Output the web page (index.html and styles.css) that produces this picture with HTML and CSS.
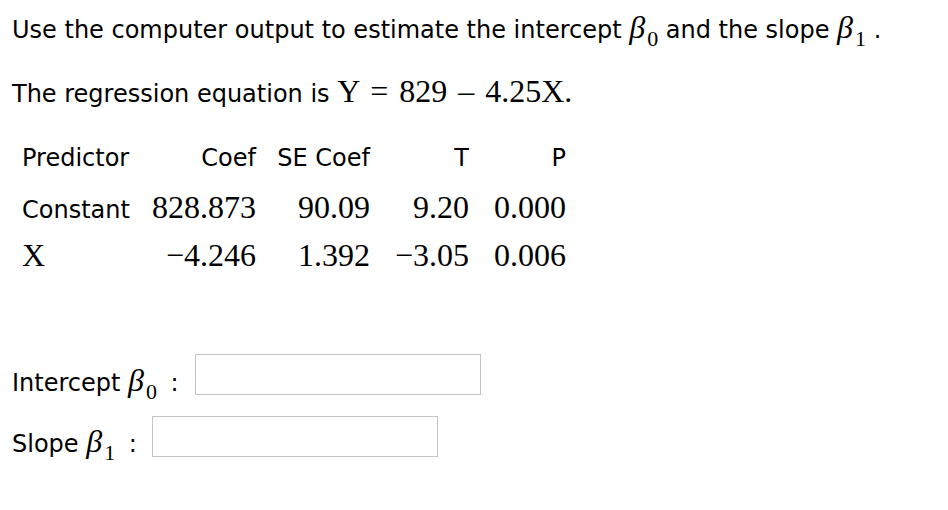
FILE: index.html
```html
<!DOCTYPE html>
<html>
<head>
<meta charset="utf-8">
<link rel="stylesheet" href="styles.css">
</head>
<body>
<div class="page">
  <p class="line l1">Use the computer output to estimate the intercept <span class="m"><i>β</i><sub>0</sub></span> and the slope <span class="m"><i>β</i><sub>1</sub></span> .</p>
  <p class="line l2">The regression equation is <span class="m">Y <span class="op">=</span> 829 <span class="op">–</span> 4.25X.</span></p>
  <div class="reg">
    <div class="row hd"><span class="c0">Predictor</span><span>Coef</span><span>SE Coef</span><span>T</span><span>P</span></div>
    <div class="row num"><span class="c0 sans">Constant</span><span>828.873</span><span>90.09</span><span>9.20</span><span>0.000</span></div>
    <div class="row num"><span class="c0">X</span><span>−4.246</span><span>1.392</span><span>−3.05</span><span>0.006</span></div>
  </div>
  <div class="field f1"><span class="lab">Intercept <span class="m fm"><i>β</i><sub>0</sub></span> :</span><span class="box b1"></span></div>
  <div class="field f2"><span class="lab">Slope <span class="m fm"><i>β</i><sub>1</sub></span> :</span><span class="box b2"></span></div>
</div>
</body>
</html>
```
FILE: styles.css
```css
body { margin: 0; background: #fff; }
.page { padding: 0 0 0 12px; font-family: "DejaVu Sans", Verdana, sans-serif; font-size: 24px; color: #000; }
.line { margin: 0; white-space: nowrap; line-height: 36px; height: 36px; }
.l1 { padding-top: 12px; }
.l2 { margin-top: 28px; }
.m { font-family: "Liberation Serif", "Times New Roman", serif; font-size: 32px; line-height: 0; }
.m i { font-style: italic; }
.m sub { font-size: 22px; vertical-align: -8px; line-height: 0; margin-left: 2px; }
.fm sub { margin-right: 6px; }
.op { margin: 0 3px; }
.reg { margin-top: 28px; margin-left: 10px; }
.row { display: grid; grid-template-columns: 108px 126px 114px 99px 97px; align-items: baseline; height: 48px; white-space: nowrap; }
.row > span { text-align: right; line-height: 40px; }
.row > span.c0 { text-align: left; }
.hd { height: 47px; }
.hd > span { line-height: 36px; }
.num > span { font-family: "Liberation Serif", "Times New Roman", serif; font-size: 32px; }
.num > span.sans { font-family: "DejaVu Sans", Verdana, sans-serif; font-size: 24px; }
.field { display: flex; align-items: flex-start; white-space: nowrap; }
.f1 { margin-top: 71px; }
.f2 { margin-top: 15px; }
.lab { padding-top: 11px; line-height: 36px; margin-right: 16px; }
.f2 .lab { padding-top: 10px; margin-right: 15px; }
.box { display: block; width: 284px; height: 39px; border: 1px solid #c4c4c4; }
```
